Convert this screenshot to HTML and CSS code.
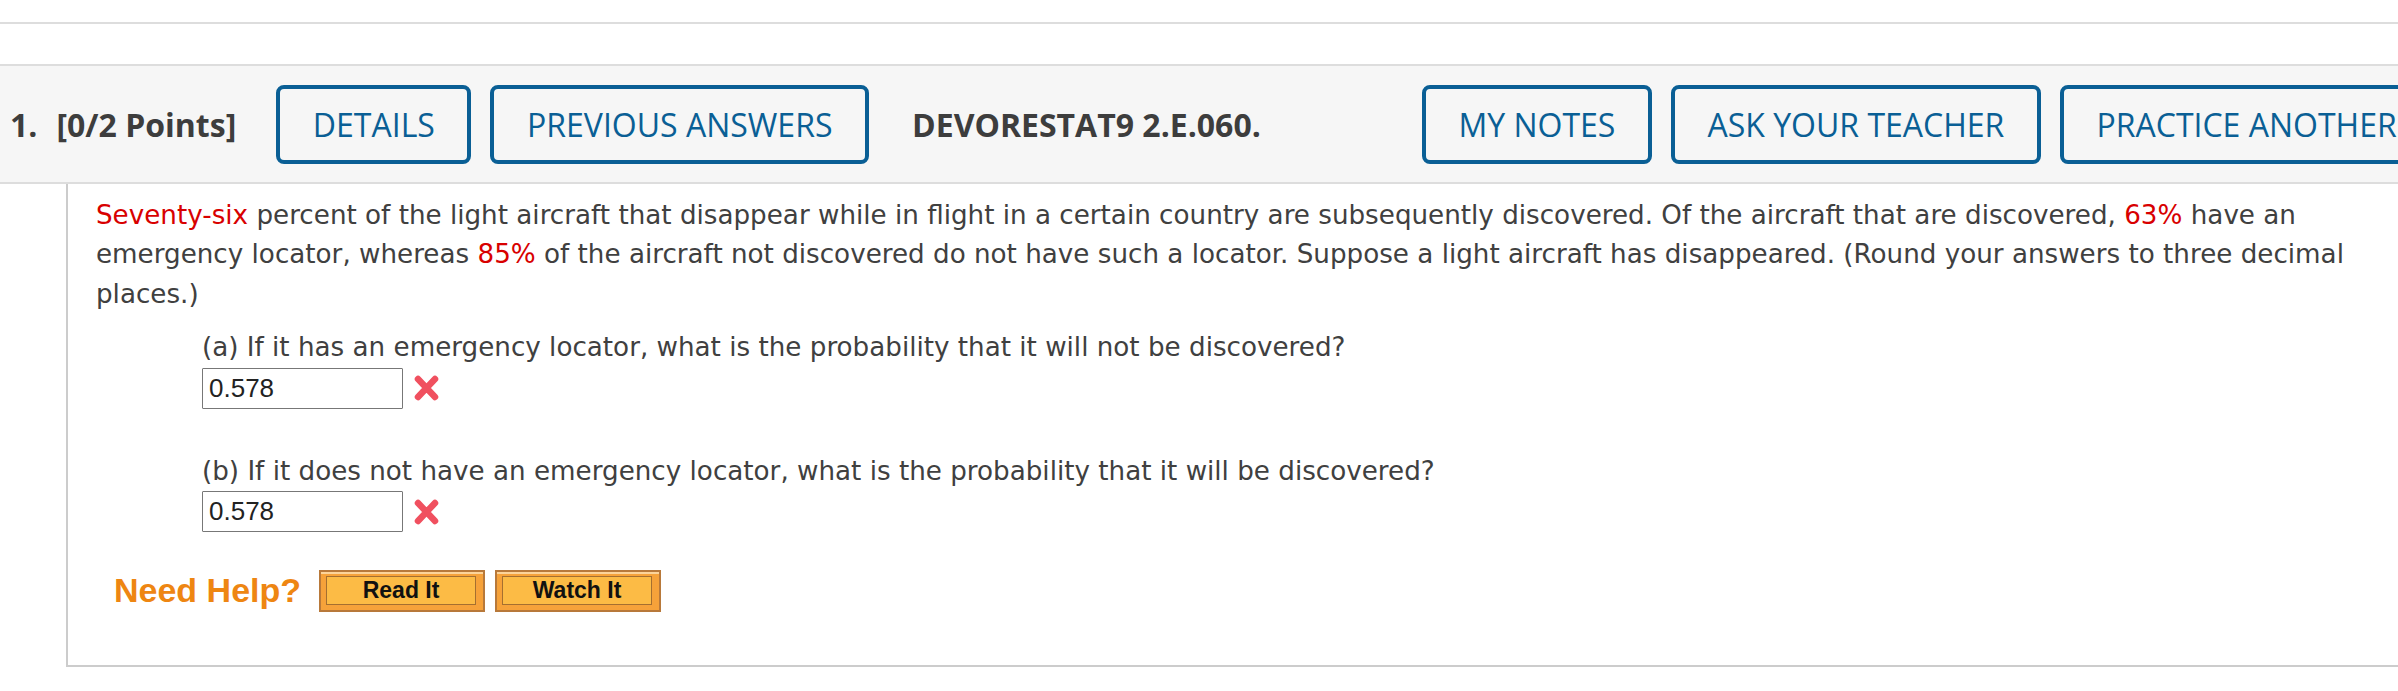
FILE: index.html
```html
<!DOCTYPE html>
<html lang="en">
<head>
<meta charset="utf-8">
<title>Question 1</title>
<link rel="stylesheet" href="styles.css">
</head>
<body>
<div class="topbar"></div>
<div class="qhead">
  <div class="qnum"><span>1.</span><span class="pts">[0/2 Points]</span></div>
  <a class="hbtn first">DETAILS</a>
  <a class="hbtn">PREVIOUS ANSWERS</a>
  <div class="qid">DEVORESTAT9 2.E.060.</div>
  <a class="hbtn notes">MY NOTES</a>
  <a class="hbtn">ASK YOUR TEACHER</a>
  <a class="hbtn">PRACTICE ANOTHER</a>
</div>
<div class="qbody">
  <p class="stem"><span class="red">Seventy-six</span> percent of the light aircraft that disappear while in flight in a certain country are subsequently discovered. Of the aircraft that are discovered, <span class="red">63%</span> have an emergency locator, whereas <span class="red">85%</span> of the aircraft not discovered do not have such a locator. Suppose a light aircraft has disappeared. (Round your answers to three decimal places.)</p>
  <div class="part part-a">
    <div class="prompt">(a) If it has an emergency locator, what is the probability that it will not be discovered?</div>
    <div class="answer">
      <input class="ans" type="text" value="0.578" readonly>
      <svg class="wrong" viewBox="0 0 27 28" width="27" height="28"><path d="M5 5 L22 23 M22 5 L5 23" /></svg>
    </div>
  </div>
  <div class="part part-b">
    <div class="prompt">(b) If it does not have an emergency locator, what is the probability that it will be discovered?</div>
    <div class="answer">
      <input class="ans" type="text" value="0.578" readonly>
      <svg class="wrong" viewBox="0 0 27 28" width="27" height="28"><path d="M5 5 L22 23 M22 5 L5 23" /></svg>
    </div>
  </div>
  <div class="help">
    <span class="help-label">Need Help?</span>
    <span class="help-btn"><span class="help-inner">Read It</span></span>
    <span class="help-btn watch"><span class="help-inner">Watch It</span></span>
  </div>
</div>
</body>
</html>
```
FILE: styles.css
```css
html, body {
  margin: 0;
  padding: 0;
  background: #ffffff;
}
body {
  overflow: hidden;
  width: 2398px;
  height: 691px;
}
.topbar {
  height: 22px;
  border-bottom: 2px solid #dddddd;
}
.qhead {
  margin-top: 40px;
  height: 116px;
  border-top: 2px solid #dddddd;
  border-bottom: 2px solid #dddddd;
  background: #f6f6f6;
  display: flex;
  align-items: center;
  padding-left: 10px;
  white-space: nowrap;
  font-family: "Open Sans", "Liberation Sans", sans-serif;
  font-size: 32px;
}
.qhead > * {
  flex-shrink: 0;
}
.qnum {
  font-weight: 700;
  color: #3d3d3d;
  display: flex;
}
.pts {
  margin-left: 19px;
}
.hbtn {
  box-sizing: border-box;
  height: 79px;
  display: flex;
  align-items: center;
  padding: 0 32.6px;
  border: 4px solid #0a5f95;
  border-radius: 8px;
  color: #0a5f95;
  margin-left: 19px;
}
.hbtn.first {
  margin-left: 40px;
}
.hbtn.notes {
  margin-left: 161px;
}
.qid {
  font-weight: 700;
  color: #3d3d3d;
  margin-left: 43px;
}
.qbody {
  margin-left: 66px;
  border-left: 2px solid #cccccc;
  border-bottom: 2px solid #cccccc;
  padding: 12px 30px 53px 28px;
  font-family: "DejaVu Sans", Verdana, sans-serif;
  font-size: 26.2px;
  line-height: 39.4px;
  color: #404040;
}
.stem {
  margin: 0;
}
.red {
  color: #d80000;
}
.part {
  margin-left: 106px;
}
.part-a {
  margin-top: 14px;
}
.part-b {
  margin-top: 43px;
}
.answer {
  display: flex;
  align-items: center;
  gap: 10px;
}
.ans {
  box-sizing: border-box;
  width: 201px;
  height: 41px;
  margin: 0;
  border: 1px solid #777777;
  border-radius: 1px;
  padding: 0 6px;
  font-family: "Liberation Sans", Arial, sans-serif;
  font-size: 26px;
  color: #222222;
  background: #ffffff;
  outline: none;
}
.wrong {
  display: block;
  filter: blur(0.4px);
}
.wrong path {
  stroke: #f0505f;
  stroke-width: 6.5;
  stroke-linecap: round;
  fill: none;
}
.help {
  margin-top: 38px;
  margin-left: 18px;
  display: flex;
  align-items: center;
}
.help-label {
  font-family: "Liberation Sans", Arial, sans-serif;
  font-weight: 700;
  font-size: 34px;
  color: #ee8612;
  margin-right: 18px;
}
.help-btn {
  box-sizing: border-box;
  width: 166px;
  height: 42px;
  border: 2px solid #b8793a;
  background: #f6a23a;
  box-shadow: inset 0 2px 0 #fcd49a;
  padding: 4px 7px 5px 5px;
  display: flex;
}
.help-btn.watch {
  margin-left: 10px;
}
.help-inner {
  flex: 1;
  border: 1px solid #a56f30;
  background: #fcbb45;
  display: flex;
  align-items: center;
  justify-content: center;
  font-family: "Liberation Sans", Arial, sans-serif;
  font-weight: 700;
  font-size: 23px;
  color: #111111;
}
```
